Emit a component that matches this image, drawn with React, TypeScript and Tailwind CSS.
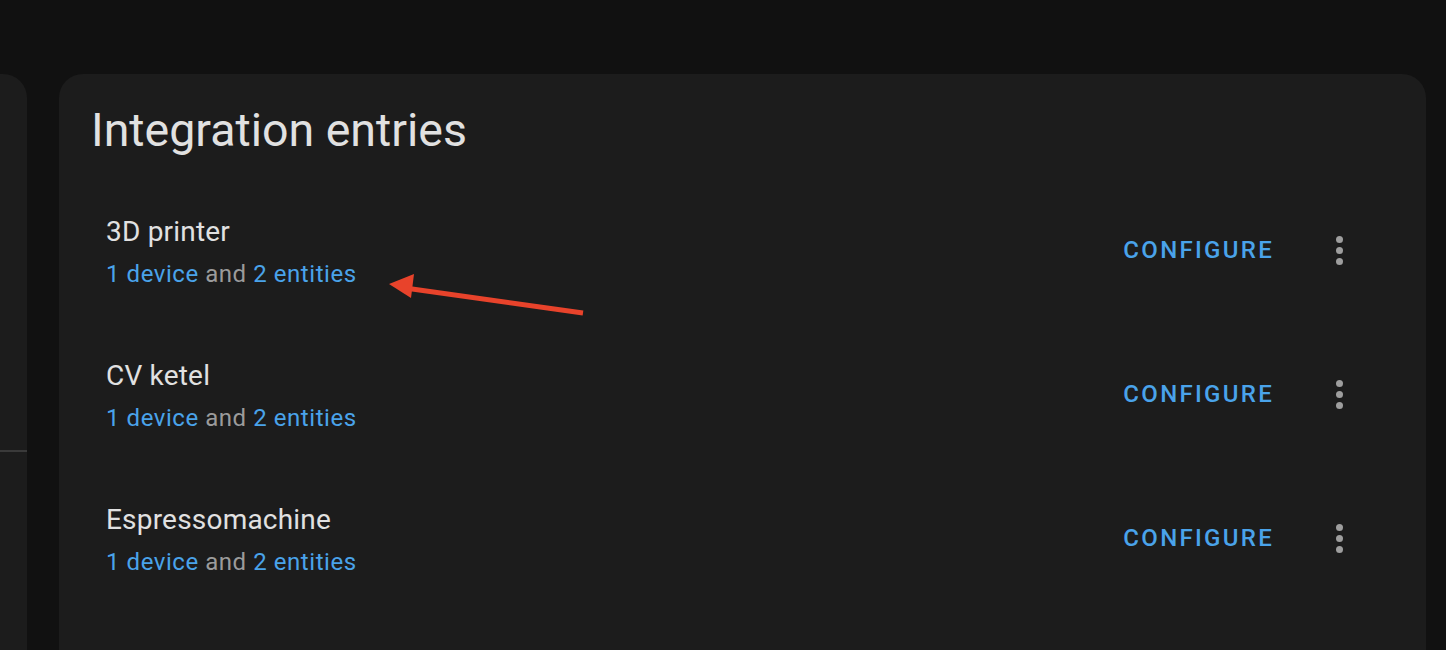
const entries = [{ name: "3D printer" }, { name: "CV ketel" }, { name: "Espressomachine" }]

function EntryRow({ name }: { name: string }) {
  return (
    <div className="flex items-center h-[144px] pl-[47px] pr-[76px]">
      <div className="flex-1 flex flex-col pt-[8px]">
        <span className="text-[28px] leading-[36px] tracking-[0.2px] text-[#e1e1e1]">{name}</span>
        <span className="text-[24px] leading-[40px] tracking-[0.55px] text-[#9b9b9b] mt-1">
          <span className="text-[#4aa3ea]">1 device</span> and{" "}
          <span className="text-[#4aa3ea]">2 entities</span>
        </span>
      </div>
      <button className="text-[24px] font-medium tracking-[2.3px] text-[#4aa3ea] mr-[54px]">CONFIGURE</button>
      <div className="w-[22px] flex flex-col items-center gap-[4px]">
        <span className="w-[7px] h-[7px] rounded-full bg-[#9e9e9e]" />
        <span className="w-[7px] h-[7px] rounded-full bg-[#9e9e9e]" />
        <span className="w-[7px] h-[7px] rounded-full bg-[#9e9e9e]" />
      </div>
    </div>
  )
}

export default function App() {
  return (
    <div className="relative h-[650px] overflow-hidden bg-[#111111] pt-[74px] flex gap-[32px]" style={{ fontFamily: "Roboto, 'Liberation Sans', sans-serif" }}>
      {/* cut-off card on the left */}
      <div className="w-[27px] shrink-0 bg-[#1c1c1c] rounded-tr-[24px] pt-[376px]">
        <div className="h-[2px] bg-[#3a3a3a]" />
      </div>

      {/* Integration entries card */}
      <div className="flex-1 mr-[20px] bg-[#1c1c1c] rounded-t-[24px] pt-[28px]">
        <h1 className="pl-[32px] text-[46.5px] leading-[56px] text-[#e1e1e1]">Integration entries</h1>
        <div className="mt-[20px]">
          {entries.map((e) => (
            <EntryRow key={e.name} name={e.name} />
          ))}
        </div>
      </div>

      {/* annotation arrow */}
      <svg className="absolute left-0 top-0 pointer-events-none" width="1446" height="650">
        <line x1="583" y1="313" x2="405" y2="288" stroke="#e8432b" strokeWidth="5" />
        <polygon points="389,284 414,274 411,298" fill="#e8432b" />
      </svg>
    </div>
  )
}
